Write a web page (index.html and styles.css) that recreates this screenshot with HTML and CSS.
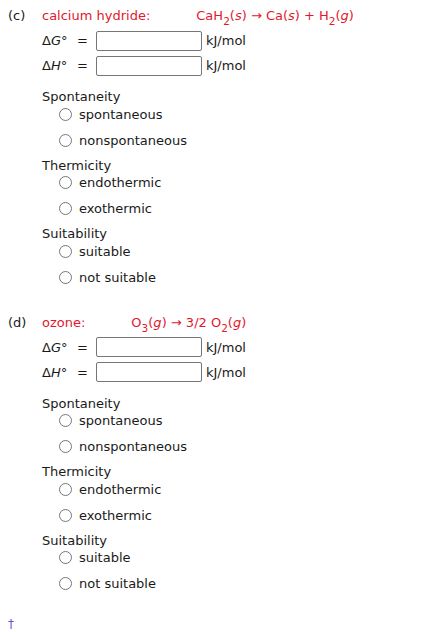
FILE: index.html
```html
<!DOCTYPE html>
<html>
<head>
<meta charset="utf-8">
<link rel="stylesheet" href="styles.css">
</head>
<body>
<div class="page">
  <div class="part">
    <div class="row head">
      <span class="letter">(c)</span>
      <span class="name">calcium hydride:</span>
      <span class="formula">CaH<sub>2</sub>(<i>s</i>) → Ca(<i>s</i>) + H<sub>2</sub>(<i>g</i>)</span>
    </div>
    <div class="row field">
      <span class="sym">Δ<i>G</i>°</span><span class="eq">=</span><span class="box"></span><span class="unit">kJ/mol</span>
    </div>
    <div class="row field">
      <span class="sym">Δ<i>H</i>°</span><span class="eq">=</span><span class="box"></span><span class="unit">kJ/mol</span>
    </div>
    <div class="groups">
      <div class="group">
        <div class="gtitle">Spontaneity</div>
        <label class="opt"><input type="radio" name="c1" class="radio"><span>spontaneous</span></label>
        <label class="opt"><input type="radio" name="c1" class="radio"><span>nonspontaneous</span></label>
      </div>
      <div class="group">
        <div class="gtitle">Thermicity</div>
        <label class="opt"><input type="radio" name="c2" class="radio"><span>endothermic</span></label>
        <label class="opt"><input type="radio" name="c2" class="radio"><span>exothermic</span></label>
      </div>
      <div class="group">
        <div class="gtitle">Suitability</div>
        <label class="opt"><input type="radio" name="c3" class="radio"><span>suitable</span></label>
        <label class="opt"><input type="radio" name="c3" class="radio"><span>not suitable</span></label>
      </div>
    </div>
  </div>

  <div class="part">
    <div class="row head">
      <span class="letter">(d)</span>
      <span class="name">ozone:</span>
      <span class="formula">O<sub>3</sub>(<i>g</i>) → 3/2 O<sub>2</sub>(<i>g</i>)</span>
    </div>
    <div class="row field">
      <span class="sym">Δ<i>G</i>°</span><span class="eq">=</span><span class="box"></span><span class="unit">kJ/mol</span>
    </div>
    <div class="row field">
      <span class="sym">Δ<i>H</i>°</span><span class="eq">=</span><span class="box"></span><span class="unit">kJ/mol</span>
    </div>
    <div class="groups">
      <div class="group">
        <div class="gtitle">Spontaneity</div>
        <label class="opt"><input type="radio" name="d1" class="radio"><span>spontaneous</span></label>
        <label class="opt"><input type="radio" name="d1" class="radio"><span>nonspontaneous</span></label>
      </div>
      <div class="group">
        <div class="gtitle">Thermicity</div>
        <label class="opt"><input type="radio" name="d2" class="radio"><span>endothermic</span></label>
        <label class="opt"><input type="radio" name="d2" class="radio"><span>exothermic</span></label>
      </div>
      <div class="group">
        <div class="gtitle">Suitability</div>
        <label class="opt"><input type="radio" name="d3" class="radio"><span>suitable</span></label>
        <label class="opt"><input type="radio" name="d3" class="radio"><span>not suitable</span></label>
      </div>
    </div>
  </div>

  <div class="foot"><a class="dagger">†</a></div>
</div>
</body>
</html>
```

FILE: styles.css
```css
html, body {
  margin: 0;
  padding: 0;
  background: #ffffff;
}
body {
  font-family: "DejaVu Sans", Verdana, sans-serif;
  font-size: 13px;
  color: #1a1a1a;
}
.page {
  padding: 3px 0 0 8px;
}
.part {
  display: flex;
  flex-direction: column;
  margin-bottom: 23.5px;
}
.row {
  display: flex;
  align-items: center;
  height: 25px;
}
.head .letter {
  width: 34px;
}
.head .name {
  color: #e3172d;
}
.head .formula {
  color: #e3172d;
  margin-left: 46px;
}
sub {
  font-size: 10.5px;
  vertical-align: -5px;
  line-height: 0;
}
.field {
  padding-left: 34px;
}
.sym {
  width: 35px;
}
.eq {
  width: 19px;
}
.box {
  box-sizing: border-box;
  width: 106px;
  height: 20px;
  border: 1px solid #767676;
  border-radius: 2px;
  background: #fff;
}
.unit {
  margin-left: 4px;
}
.groups {
  padding-left: 34px;
  padding-top: 10px;
  display: flex;
  flex-direction: column;
  gap: 7.5px;
}
.group {
  display: flex;
  flex-direction: column;
  gap: 8px;
}
.gtitle {
  height: 17px;
  line-height: 17px;
  margin-bottom: -8px;
}
.opt {
  display: flex;
  align-items: center;
  height: 18px;
  padding-left: 17px;
}
.radio {
  width: 13px;
  height: 13px;
  margin: 0 7px 0 0;
}
.foot {
  height: 16px;
  line-height: 16px;
  margin-top: 8px;
}
.dagger {
  color: #5a5ad6;
  font-size: 12px;
}
```
